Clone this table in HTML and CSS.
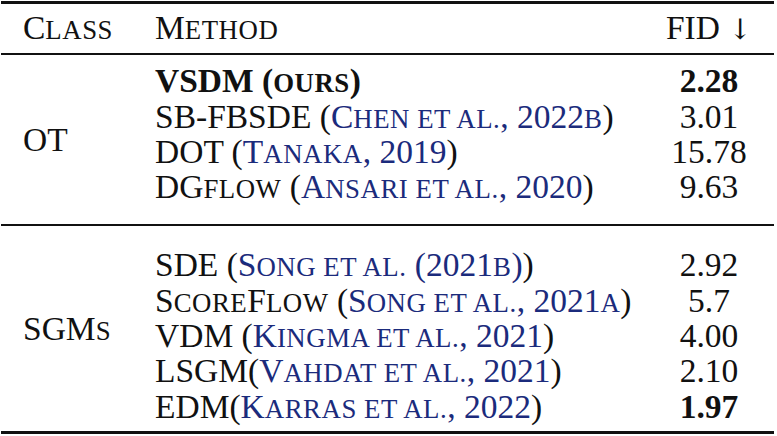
FILE: index.html
```html
<!DOCTYPE html>
<html>
<head>
<meta charset="utf-8">
<link rel="stylesheet" href="styles.css">
</head>
<body>
<table class="tbl">
  <colgroup>
    <col class="c-class">
    <col class="c-method">
    <col class="c-fid">
  </colgroup>
  <thead>
    <tr class="head">
      <th class="cls">C<span class="s">LASS</span></th>
      <th class="meth">M<span class="s">ETHOD</span></th>
      <th class="fid">FID <span class="arrow">↓</span></th>
    </tr>
  </thead>
  <tbody class="grp grp-ot">
    <tr class="first">
      <td class="cls" rowspan="4">OT</td>
      <td class="meth"><b>VSDM (<span class="s">OURS</span>)</b></td>
      <td class="fid"><b>2.28</b></td>
    </tr>
    <tr>
      <td class="meth">SB-FBSDE (<span class="cite">C<span class="s">HEN ET AL.</span>, 2022<span class="s">B</span></span>)</td>
      <td class="fid">3.01</td>
    </tr>
    <tr>
      <td class="meth">DOT (<span class="cite">T<span class="s">ANAKA</span>, 2019</span>)</td>
      <td class="fid">15.78</td>
    </tr>
    <tr class="last">
      <td class="meth">DG<span class="s">FLOW</span> (<span class="cite">A<span class="s">NSARI ET AL.</span>, 2020</span>)</td>
      <td class="fid">9.63</td>
    </tr>
  </tbody>
  <tbody class="grp grp-sgm">
    <tr class="first">
      <td class="cls" rowspan="5">SGM<span class="s">S</span></td>
      <td class="meth">SDE (<span class="cite">S<span class="s">ONG ET AL.</span> (2021<span class="s">B</span>)</span>)</td>
      <td class="fid">2.92</td>
    </tr>
    <tr>
      <td class="meth">S<span class="s">CORE</span>F<span class="s">LOW</span> (<span class="cite">S<span class="s">ONG ET AL.</span>, 2021<span class="s">A</span></span>)</td>
      <td class="fid">5.7</td>
    </tr>
    <tr>
      <td class="meth">VDM (<span class="cite">K<span class="s">INGMA ET AL.</span>, 2021</span>)</td>
      <td class="fid">4.00</td>
    </tr>
    <tr>
      <td class="meth">LSGM(<span class="cite">V<span class="s">AHDAT ET AL.</span>, 2021</span>)</td>
      <td class="fid">2.10</td>
    </tr>
    <tr class="last">
      <td class="meth">EDM(<span class="cite">K<span class="s">ARRAS ET AL.</span>, 2022</span>)</td>
      <td class="fid"><b>1.97</b></td>
    </tr>
  </tbody>
</table>
</body>
</html>
```
FILE: styles.css
```css
html, body {
  margin: 0;
  padding: 0;
  background: #ffffff;
}

body {
  font-family: "Liberation Serif", "Times New Roman", serif;
  font-size: 33.5px;
  color: #111111;
}

.tbl {
  border-collapse: collapse;
  width: 773px;
  margin: 1px 0 0 1px;
  border-top: 3px solid #111;
  border-bottom: 3px solid #111;
  table-layout: fixed;
}

.c-class { width: 132px; }
.c-method { width: 511px; }
.c-fid { width: 130px; }

th, td {
  padding: 0;
  height: 35.3px;
  line-height: 35.3px;
  font-weight: normal;
  white-space: nowrap;
  vertical-align: middle;
  box-sizing: content-box;
}

th.cls, td.cls {
  text-align: left;
  padding-left: 22px;
}

th.meth, td.meth {
  text-align: left;
  padding-left: 22px;
}

th.fid, td.fid {
  text-align: center;
}

.head th {
  padding-top: 6px;
  padding-bottom: 8px;
}

.grp {
  border-top: 2px solid #111;
}

.grp-ot .first td { padding-top: 8px; }
.grp-ot .last td { padding-bottom: 20px; }
.grp-sgm .first td { padding-top: 21px; }
.grp-sgm .last td { padding-bottom: 7px; }

.grp td.cls {
  padding-top: 0;
  padding-bottom: 0;
}

.s {
  font-size: 0.8em;
  line-height: 0;
  letter-spacing: 0.02em;
}

.cite {
  color: #1b2b7c;
  line-height: 0;
}

b {
  font-weight: bold;
  line-height: 0;
}

.arrow {
  font-family: "DejaVu Serif", "Liberation Serif", serif;
  font-size: 0.85em;
  line-height: 0;
}
```
